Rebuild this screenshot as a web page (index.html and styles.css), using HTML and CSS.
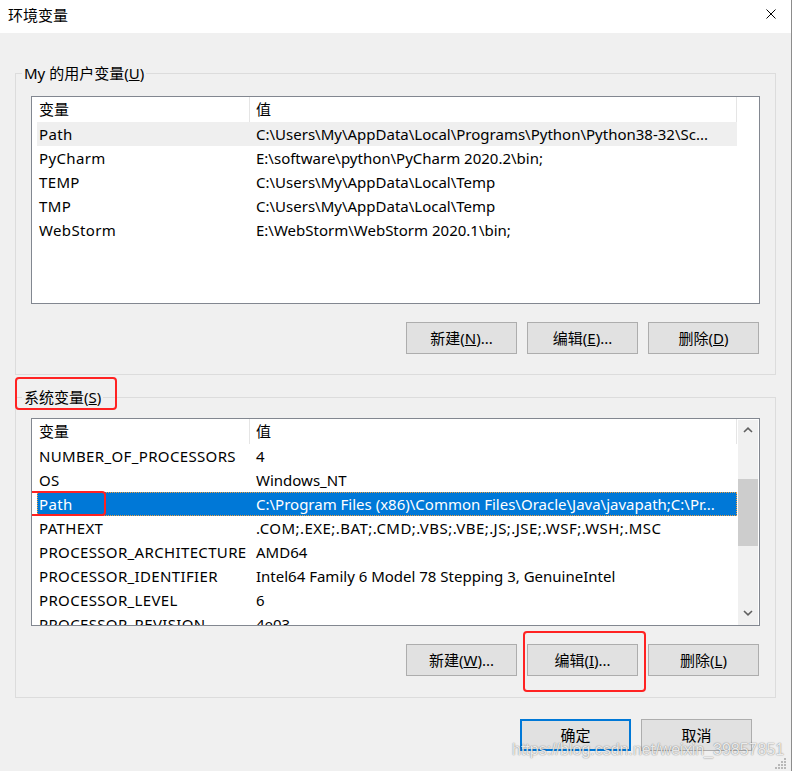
FILE: index.html
```html
<!DOCTYPE html>
<html lang="zh-CN">
<head>
<meta charset="utf-8">
<title>环境变量</title>
<link rel="stylesheet" href="styles.css">
</head>
<body>
<div class="window">
  <div class="titlebar">
    <span class="title">环境变量</span>
    <svg class="close" width="10" height="10" viewBox="0 0 10 10"><path d="M0.5 0.5L9.5 9.5M9.5 0.5L0.5 9.5" stroke="#000" stroke-width="1" fill="none"/></svg>
  </div>
  <div class="content">
    <fieldset class="group">
      <legend>My 的用户变量(<u>U</u>)</legend>
      <div class="group-inner">
        <div class="list">
          <div class="list-main">
            <div class="header"><div class="c1">变量</div><div class="c2">值</div></div>
            <div class="row inactive-sel"><div class="c1">Path</div><div class="c2">C:\Users\My\AppData\Local\Programs\Python\Python38-32\Sc...</div></div>
            <div class="row"><div class="c1">PyCharm</div><div class="c2">E:\software\python\PyCharm 2020.2\bin;</div></div>
            <div class="row"><div class="c1">TEMP</div><div class="c2">C:\Users\My\AppData\Local\Temp</div></div>
            <div class="row"><div class="c1">TMP</div><div class="c2">C:\Users\My\AppData\Local\Temp</div></div>
            <div class="row"><div class="c1">WebStorm</div><div class="c2">E:\WebStorm\WebStorm 2020.1\bin;</div></div>
          </div>
        </div>
        <div class="buttons">
          <button class="btn">新建(<u>N</u>)...</button>
          <button class="btn">编辑(<u>E</u>)...</button>
          <button class="btn">删除(<u>D</u>)</button>
        </div>
      </div>
    </fieldset>

    <fieldset class="group sys">
      <legend class="marked">系统变量(<u>S</u>)</legend>
      <div class="group-inner">
        <div class="list">
          <div class="list-main">
            <div class="header"><div class="c1">变量</div><div class="c2">值</div></div>
            <div class="row"><div class="c1">NUMBER_OF_PROCESSORS</div><div class="c2">4</div></div>
            <div class="row"><div class="c1">OS</div><div class="c2">Windows_NT</div></div>
            <div class="row selected"><div class="c1 marked">Path</div><div class="c2">C:\Program Files (x86)\Common Files\Oracle\Java\javapath;C:\Pr...</div></div>
            <div class="row"><div class="c1">PATHEXT</div><div class="c2 wide">.COM;.EXE;.BAT;.CMD;.VBS;.VBE;.JS;.JSE;.WSF;.WSH;.MSC</div></div>
            <div class="row"><div class="c1">PROCESSOR_ARCHITECTURE</div><div class="c2">AMD64</div></div>
            <div class="row"><div class="c1">PROCESSOR_IDENTIFIER</div><div class="c2">Intel64 Family 6 Model 78 Stepping 3, GenuineIntel</div></div>
            <div class="row"><div class="c1">PROCESSOR_LEVEL</div><div class="c2">6</div></div>
            <div class="row"><div class="c1">PROCESSOR_REVISION</div><div class="c2">4e03</div></div>
          </div>
          <div class="scrollbar">
            <div class="sb-btn"><svg width="10" height="6" viewBox="0 0 10 6"><path d="M1 5L5 1.2L9 5" stroke="#606060" stroke-width="1.6" fill="none"/></svg></div>
            <div class="sb-track"><div class="sb-thumb"></div></div>
            <div class="sb-btn down"><svg width="10" height="6" viewBox="0 0 10 6"><path d="M1 1L5 4.8L9 1" stroke="#606060" stroke-width="1.6" fill="none"/></svg></div>
          </div>
        </div>
        <div class="buttons">
          <button class="btn">新建(<u>W</u>)...</button>
          <button class="btn marked">编辑(<u>I</u>)...</button>
          <button class="btn">删除(<u>L</u>)</button>
        </div>
      </div>
    </fieldset>

    <div class="footer">
      <button class="btn default">确定</button>
      <button class="btn">取消</button>
    </div>
  </div>
  <div class="watermark">https://blog.csdn.net/weixin_39857851</div>
  <svg class="grip" width="12" height="12" viewBox="0 0 12 12">
    <rect x="9" y="1" width="2" height="2" fill="#b8b8b8"/>
    <rect x="6" y="4" width="2" height="2" fill="#b8b8b8"/>
    <rect x="9" y="4" width="2" height="2" fill="#b8b8b8"/>
    <rect x="3" y="7" width="2" height="2" fill="#b8b8b8"/>
    <rect x="6" y="7" width="2" height="2" fill="#b8b8b8"/>
    <rect x="9" y="7" width="2" height="2" fill="#b8b8b8"/>
    <rect x="0" y="10" width="2" height="2" fill="#b8b8b8"/>
    <rect x="3" y="10" width="2" height="2" fill="#b8b8b8"/>
    <rect x="6" y="10" width="2" height="2" fill="#b8b8b8"/>
    <rect x="9" y="10" width="2" height="2" fill="#b8b8b8"/>
  </svg>
</div>
</body>
</html>
```

FILE: styles.css
```css
*, *::before, *::after { box-sizing: border-box; }
html, body { margin: 0; padding: 0; }
body {
  font-family: "Noto Sans", "Noto Sans CJK SC", sans-serif;
  font-size: 15px;
  color: #000;
  background: #f0f0f0;
}
.window {
  position: relative;
  width: 792px;
  height: 771px;
  background: #f0f0f0;
  border-right: 1px solid #8c8c8c;
  overflow: hidden;
}
.titlebar {
  height: 33px;
  background: #fff;
  display: flex;
  align-items: flex-start;
  justify-content: space-between;
  padding: 0 15px 0 8px;
}
.title {
  line-height: 20px;
  padding-top: 5px;
}
.close { margin-top: 9px; }

.content { padding: 30px 15px 0 15px; }

.group {
  margin: 0;
  padding: 0;
  min-width: 0;
  border: 1px solid #dcdcdc;
}
.group legend {
  margin-left: 6px;
  padding: 0 2px;
  line-height: 21px;
  font-size: 15px;
}
.group-inner { padding: 12px 15px 20px 15px; }
.group.sys { margin-top: 12px; }
.group.sys .group-inner { padding-top: 10px; padding-bottom: 21px; }

.list {
  height: 208px;
  border: 1px solid #828790;
  background: #fff;
  display: flex;
}
.list-main {
  flex: 1;
  min-width: 0;
  overflow: hidden;
  padding-left: 5px;
}
.header, .row {
  display: flex;
  width: 700px;
}
.header { height: 25px; line-height: 25px; }
.row { height: 24px; line-height: 24px; }
.c1, .c2 {
  white-space: nowrap;
  overflow: hidden;
}
.c1 { width: 213px; padding-left: 2px; }
.row .c1 { letter-spacing: 0.35px; }
.c2 { width: 487px; padding-left: 6px; }
.c2.wide { letter-spacing: 0.45px; }
.header .c1, .header .c2 { border-right: 1px solid #e5e5e5; }

.row.inactive-sel { background: #efefef; }
.row.selected {
  background: #0078d7;
  color: #fff;
  outline: 1px dotted #f0a040;
  outline-offset: -1px;
}

.scrollbar {
  width: 20px;
  margin: 1px 1px 0 0;
  background: #f0f0f0;
  display: flex;
  flex-direction: column;
}
.sb-btn {
  height: 20px;
  display: flex;
  align-items: center;
  justify-content: center;
}
.sb-btn svg { display: block; }
.sb-btn.down { align-items: flex-start; padding-top: 5px; }
.sb-track { flex: 1; }
.sb-thumb {
  margin-top: 39px;
  height: 67px;
  background: #cdcdcd;
}

.buttons {
  display: flex;
  justify-content: flex-end;
  gap: 10px;
  margin-top: 18px;
  padding-right: 1px;
}
.btn {
  width: 111px;
  height: 32px;
  padding: 0;
  background: #e1e1e1;
  border: 1px solid #adadad;
  font-family: inherit;
  font-size: 15px;
  line-height: 20px;
  color: #000;
}
.btn.default { border: 2px solid #0078d7; }
.footer {
  display: flex;
  justify-content: flex-end;
  gap: 10px;
  margin-top: 21px;
  padding-right: 24px;
}

.marked { position: relative; }
.marked::after {
  content: "";
  position: absolute;
  border: 2px solid #ff2222;
  border-radius: 4px;
  pointer-events: none;
}
legend.marked::after { left: -7px; top: -10px; width: 102px; height: 33px; }
.c1.marked { overflow: visible; }
.c1.marked::after { left: -13px; top: -1px; width: 82px; height: 25px; }
.btn.marked::after { left: -5px; top: -14px; width: 123px; height: 61px; }

.watermark {
  position: absolute;
  left: 512px;
  top: 741px;
  font-family: "Liberation Sans", Arial, sans-serif;
  font-size: 16px;
  line-height: 18px;
  color: rgba(255, 255, 255, 0.85);
  text-shadow: 0 0 1px rgba(0, 0, 0, 0.45), 0 0 2px rgba(0, 0, 0, 0.2);
  white-space: nowrap;
  pointer-events: none;
}
.grip {
  position: absolute;
  right: 4px;
  bottom: 2px;
}
```
